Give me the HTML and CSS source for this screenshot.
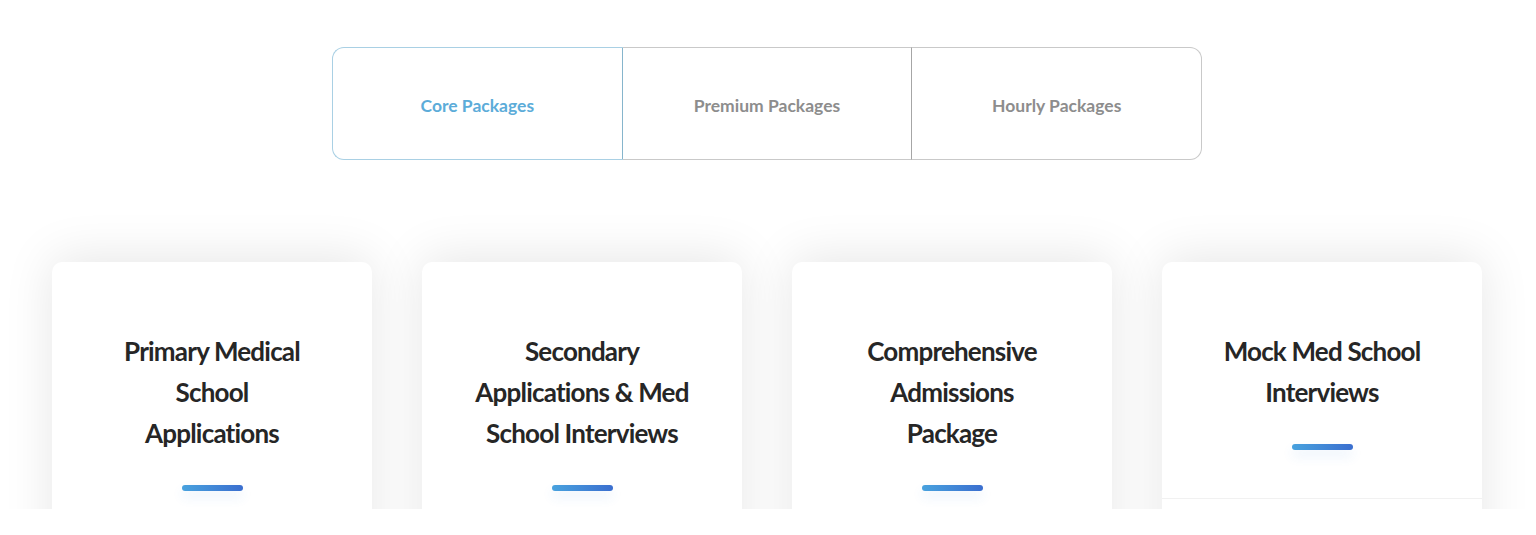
FILE: index.html
```html
<!DOCTYPE html>
<html lang="en">
<head>
<meta charset="utf-8">
<title>Packages</title>
<link rel="stylesheet" href="styles.css">
</head>
<body>
<div class="page">
  <div class="tabs">
    <div class="tab tab-active">Core Packages</div>
    <div class="tab tab-mid">Premium Packages</div>
    <div class="tab tab-last">Hourly Packages</div>
  </div>
  <div class="cards">
    <div class="card">
      <div class="card-head">
        <h3 class="card-title">Primary Medical<br>School<br>Applications</h3>
        <span class="bar"></span>
      </div>
      <div class="card-body"></div>
    </div>
    <div class="card">
      <div class="card-head">
        <h3 class="card-title">Secondary<br>Applications &amp; Med<br>School Interviews</h3>
        <span class="bar"></span>
      </div>
      <div class="card-body"></div>
    </div>
    <div class="card">
      <div class="card-head">
        <h3 class="card-title">Comprehensive<br>Admissions<br>Package</h3>
        <span class="bar"></span>
      </div>
      <div class="card-body"></div>
    </div>
    <div class="card">
      <div class="card-head">
        <h3 class="card-title">Mock Med School<br>Interviews</h3>
        <span class="bar"></span>
      </div>
      <div class="card-body"></div>
    </div>
  </div>
</div>
</body>
</html>
```

FILE: styles.css
```css
html, body {
  margin: 0;
  padding: 0;
  background: #ffffff;
}

body {
  font-family: "Lato", "Liberation Sans", sans-serif;
}

.page {
  height: 509px;
  overflow: hidden;
  display: flex;
  flex-direction: column;
  align-items: center;
  padding: 47px 2px 0 0;
  box-sizing: border-box;
}

.tabs {
  display: flex;
  flex-shrink: 0;
  width: 870px;
  height: 113px;
}

.tab {
  flex: 1;
  display: flex;
  align-items: center;
  justify-content: center;
  padding-top: 4px;
  border: 1px solid #c9c9c9;
  border-left: none;
  font-size: 17.5px;
  font-weight: 700;
  color: #8d8d8d;
  box-sizing: border-box;
}

.tab-active {
  border: 1px solid #a9d0e4;
  border-right-color: #86b5cc;
  border-radius: 12px 0 0 12px;
  color: #5cacd9;
}

.tab-mid {
  border-right-color: #a6a6a6;
}

.tab-last {
  border-radius: 0 12px 12px 0;
}

.cards {
  display: flex;
  flex-shrink: 0;
  gap: 50px;
  margin-top: 102px;
}

.card {
  width: 320px;
  background: #ffffff;
  border-radius: 10px;
  box-shadow: 0 -4px 50px rgba(0, 0, 0, 0.1);
  display: flex;
  flex-direction: column;
}

.card-head {
  display: flex;
  flex-direction: column;
  align-items: center;
  padding: 69px 30px 48px;
  border-bottom: 1px solid #f1f1f1;
}

.card-title {
  margin: 0;
  font-size: 26px;
  line-height: 41px;
  font-weight: 700;
  color: #262626;
  text-align: center;
  letter-spacing: -0.8px;
}

.bar {
  display: block;
  width: 61px;
  height: 6px;
  margin-top: 31px;
  border-radius: 3px;
  background: linear-gradient(90deg, #48a2de, #3a6ecf);
  box-shadow: 0 6px 12px rgba(60, 130, 220, 0.12);
}

.card-body {
  height: 200px;
}
```
